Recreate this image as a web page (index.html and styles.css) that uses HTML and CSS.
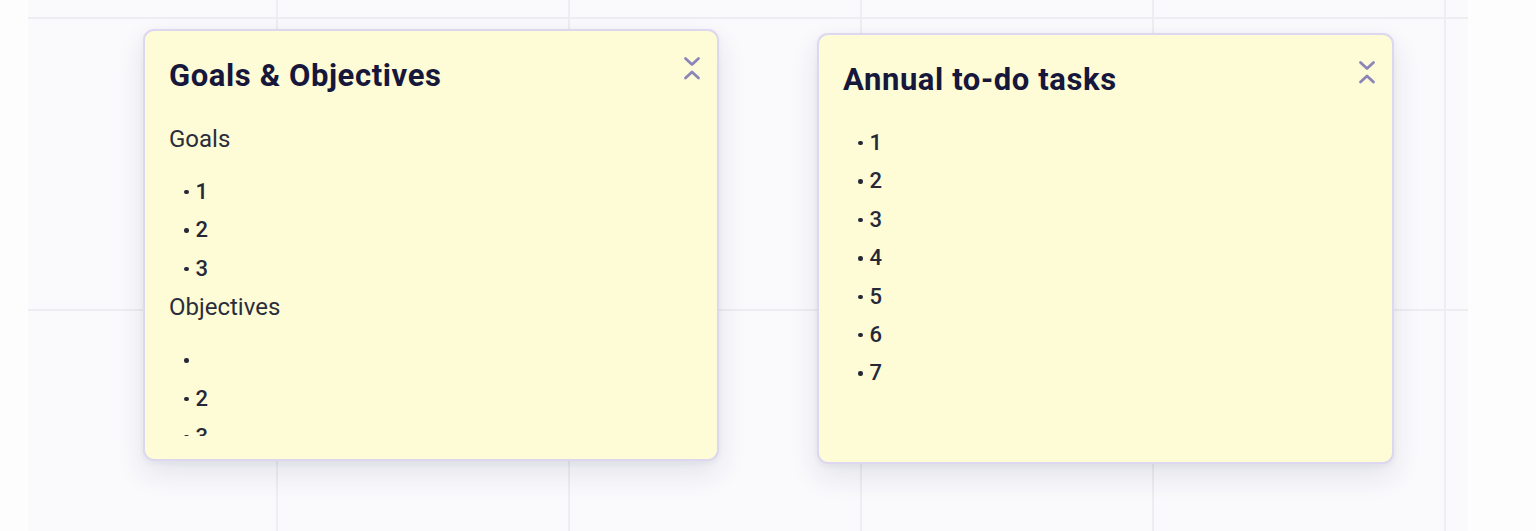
FILE: index.html
```html
<!DOCTYPE html>
<html lang="en">
<head>
<meta charset="utf-8">
<title>Board</title>
<link rel="stylesheet" href="styles.css">
</head>
<body>
<div class="page">
  <div class="canvas">
    <section class="note note-goals">
      <header class="note-head">
        <h2 class="note-title">Goals &amp; Objectives</h2>
        <button class="toggle" aria-label="Collapse">
          <svg width="18" height="24" viewBox="0 0 18 24"><path d="M2.5 2.5 L9 8.5 L15.5 2.5" /><path d="M2.5 22 L9 16 L15.5 22" /></svg>
        </button>
      </header>
      <div class="note-body">
        <p class="sub">Goals</p>
        <ul class="list">
          <li>1</li>
          <li>2</li>
          <li>3</li>
        </ul>
        <p class="sub">Objectives</p>
        <ul class="list">
          <li class="empty"></li>
          <li>2</li>
          <li>3</li>
        </ul>
      </div>
    </section>
    <section class="note note-tasks">
      <header class="note-head">
        <h2 class="note-title">Annual to-do tasks</h2>
        <button class="toggle" aria-label="Collapse">
          <svg width="18" height="24" viewBox="0 0 18 24"><path d="M2.5 2.5 L9 8.5 L15.5 2.5" /><path d="M2.5 22 L9 16 L15.5 22" /></svg>
        </button>
      </header>
      <div class="note-body">
        <ul class="list list-top">
          <li>1</li>
          <li>2</li>
          <li>3</li>
          <li>4</li>
          <li>5</li>
          <li>6</li>
          <li>7</li>
        </ul>
      </div>
    </section>
  </div>
</div>
</body>
</html>
```

FILE: styles.css
```css
* { box-sizing: border-box; }
html, body { margin: 0; padding: 0; }
body {
  background: #fdfdfe;
  font-family: Roboto, "Liberation Sans", sans-serif;
  width: 1536px;
  height: 531px;
  overflow: hidden;
}
.page {
  height: 531px;
  padding-left: 28px;
}
.canvas {
  position: relative;
  width: 1440px;
  height: 531px;
  background-color: #fafafd;
  background-image:
    linear-gradient(to right, #ededf2 0, #ededf2 2px, transparent 2px),
    linear-gradient(to bottom, #ededf2 0, #ededf2 2px, transparent 2px);
  background-size: 292px 292px;
  background-position: 248px 17px;
}
.note {
  position: absolute;
  background: #fdfcd6;
  border: 2px solid #ddd7ef;
  border-radius: 11px;
  box-shadow: 0 12px 28px rgba(40, 40, 80, 0.11), 0 2px 6px rgba(40, 40, 80, 0.05);
  display: flex;
  flex-direction: column;
  overflow: hidden;
}
.note-goals { left: 115px; top: 29px; width: 576px; height: 432px; }
.note-tasks { left: 789px; top: 33px; width: 577px; height: 431px; }
.note-head {
  display: flex;
  justify-content: space-between;
  align-items: flex-start;
  padding: 27px 16px 0 24px;
}
.note-title {
  margin: 0;
  font-size: 31px;
  line-height: 36px;
  font-weight: 700;
  color: #16173a;
  letter-spacing: 0.6px;
}
.toggle {
  border: 0;
  background: transparent;
  padding: 0;
  margin-top: -2px;
  width: 18px;
  height: 24px;
  cursor: pointer;
}
.toggle svg { display: block; }
.toggle svg path {
  fill: none;
  stroke: #8c86b8;
  stroke-width: 2.8;
  stroke-linecap: round;
  stroke-linejoin: round;
}
.note-body {
  flex: 1;
  min-height: 0;
  overflow: hidden;
  padding: 26px 24px 0 24px;
  margin-bottom: 23px;
  color: #262838;
}
.sub {
  margin: 0;
  font-size: 24px;
  line-height: 38px;
  color: #2b2d3c;
}
.list {
  list-style: none;
  margin: 15px 0 0 0;
  padding: 0 0 0 15px;
}
.list li {
  font-size: 22px;
  font-weight: 500;
  line-height: 38.4px;
  height: 38.4px;
  display: flex;
  align-items: center;
}
.list li::before {
  content: "";
  width: 4.5px;
  height: 4.5px;
  border-radius: 50%;
  background: #262838;
  margin-right: 7px;
  flex: none;
}
.list-top { margin-top: 0; }
```
